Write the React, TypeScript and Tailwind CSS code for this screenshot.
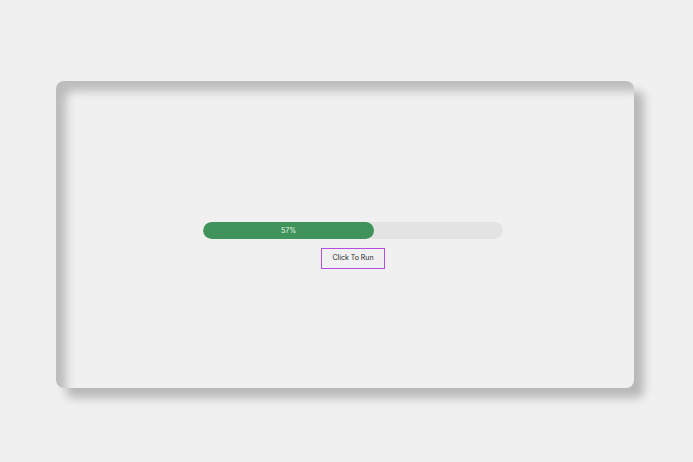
import { FC, useState } from 'react'

const ProgressBar: FC<{ value: number }> = ({ value }) => {
  return (
    <div className="w-[300px] h-[17px] rounded-full bg-[#e3e3e3] overflow-hidden">
      <div
        className="h-full rounded-full bg-[#40935a] flex items-center justify-center"
        style={{ width: `${value}%` }}
      >
        <span className="text-[7px] leading-none text-[#e8f3ea]">{value}%</span>
      </div>
    </div>
  )
}

const App: FC = () => {
  const [progress, setProgress] = useState(57)

  return (
    <div
      className="w-full h-[462px] bg-[#f0f0f0] flex items-center justify-center"
      style={{ fontFamily: 'Inter, "Liberation Sans", sans-serif' }}
    >
      <div className="w-[578px] h-[307px] -ml-[3px] mt-[7px] rounded-lg bg-[#f0f0f0] shadow-[10px_10px_10px_#b8b8b8,inset_10px_10px_10px_#bcbcbc] flex flex-col items-center justify-center gap-[9px] pl-[16px] pt-[22px]">
        <ProgressBar value={progress} />
        <button
          className="w-[64px] h-[21px] border-[1.5px] border-[#b54ee0] text-[7px] text-[#2a2a2a] bg-transparent"
          onClick={() => setProgress(p => Math.min(100, p + 1))}
        >
          Click To Run
        </button>
      </div>
    </div>
  )
}

export default App
